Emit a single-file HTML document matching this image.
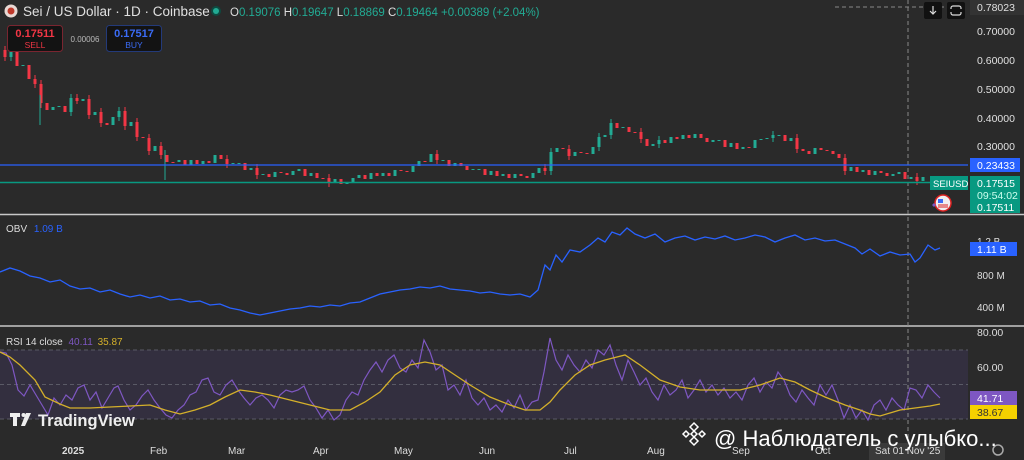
<!DOCTYPE html>
<html><head><meta charset="utf-8">
<style>
html,body{margin:0;padding:0;background:#2a2a2a;width:1024px;height:460px;overflow:hidden;font-family:"Liberation Sans","Noto Sans CJK SC",sans-serif;}
svg{display:block}
</style></head><body>
<svg width="1024" height="460" xmlns="http://www.w3.org/2000/svg" font-family="Liberation Sans, DejaVu Sans, sans-serif">
<rect width="1024" height="460" fill="#2a2a2a"/>
<rect x="0" y="350" width="968" height="69" fill="#332f3f"/>
<line x1="0" y1="350" x2="968" y2="350" stroke="#5a5a66" stroke-dasharray="4,3"/>
<line x1="0" y1="384.5" x2="968" y2="384.5" stroke="#5a5a66" stroke-dasharray="4,3"/>
<line x1="0" y1="419" x2="968" y2="419" stroke="#5a5a66" stroke-dasharray="4,3"/>
<line x1="0" y1="214.5" x2="1024" y2="214.5" stroke="#c8c8c8" stroke-width="1.5"/>
<line x1="0" y1="326" x2="1024" y2="326" stroke="#c8c8c8" stroke-width="1.5"/>
<line x1="908" y1="0" x2="908" y2="440" stroke="#888" stroke-dasharray="4,3"/>
<line x1="835" y1="7" x2="968" y2="7" stroke="#888" stroke-dasharray="4,3"/>

<!-- candles -->
<path stroke="#f23645" stroke-width="3" fill="none" d="M5 50V57M17 52V66M29 65V79M35 79V84M41 84V103M47 103V110M65 106V112M77 98V101M89 99V115M101 112V123M107 123V125M125 111V126M137 122V137M143 137V138M149 138V151M161 146V155M167 155V162M173 162V163M185 160V165M197 160V164M209 161V163M221 155V159M227 159V164M245 163V170M257 168V175M269 174V177M281 172V173M287 173V175M305 169V176M317 173V178M323 178V179M329 178V183M341 179V184M365 175V179M377 173V176M389 173V176M401 170V171M407 171V172M425 161V162M437 154V160M449 160V166M461 163V166M467 166V170M485 169V175M497 171V176M509 174V178M521 174V176M527 176V178M545 168V171M563 148V149M569 149V156M581 152V153M587 153V154M617 123V128M629 127V132M635 132V133M641 132V139M647 139V146M665 140V143M677 137V139M689 135V138M701 134V138M707 138V142M725 140V147M737 143V149M749 147V148M785 135V141M797 138V149M803 149V151M809 151V154M821 148V150M827 150V151M833 151V154M839 154V158M845 158V171M857 167V172M869 170V175M881 171V173M887 173V176M905 172V179M917 177V181"/>
<path stroke="#f23645" stroke-width="1" fill="none" d="M5 46V61M35 75V88M41 80V108M77 94V104M89 95V119M101 108V127M125 107V130M137 118V141M149 134V155M161 142V159M227 155V168M257 164V179M329 174V187M437 150V164M545 164V175M569 145V160M641 128V143M797 134V153M845 154V175M917 173V185"/>
<path stroke="#22ab94" stroke-width="3" fill="none" d="M11 52V57M23 65V66M53 107V110M59 106V107M71 98V112M83 99V101M95 112V115M113 117V125M119 111V117M131 122V126M155 146V151M179 160V162M191 160V165M203 161V164M215 155V163M233 163V164M239 163V164M251 168V170M263 174V175M275 172V177M293 171V175M299 169V171M311 173V176M335 179V183M347 183V184M353 178V183M359 175V178M371 173V179M383 173V176M395 170V176M413 166V172M419 161V166M431 154V162M443 160V161M455 163V166M473 169V170M479 169V170M491 171V175M503 174V176M515 174V178M533 173V178M539 168V173M551 152V171M557 148V152M575 152V156M593 147V154M599 137V147M605 135V137M611 123V135M623 127V128M653 144V146M659 140V144M671 137V143M683 135V139M695 134V138M713 140V142M719 140V141M731 143V147M743 147V149M755 140V148M761 139V140M767 138V139M773 135V138M779 135V136M791 138V141M815 148V154M851 167V171M863 170V172M875 171V175M893 174V176M899 172V174M911 177V179M923 177V181"/>
<path stroke="#22ab94" stroke-width="1" fill="none" d="M11 48V61M40 95V125M71 94V116M119 107V121M165 150V180M551 148V175M599 133V151M611 119V139M659 136V148M773 131V142"/>

<line x1="0" y1="165" x2="968" y2="165" stroke="#2962ff" stroke-width="1.2"/>
<line x1="0" y1="182.5" x2="968" y2="182.5" stroke="#089981" stroke-width="1.5"/>

<polyline fill="none" stroke="#2962ff" stroke-width="1.3" points="0,272 10,268 20,271 30,276 40,278 50,282 60,280 70,286 80,289 90,288 100,292 110,290 120,294 130,297 140,295 150,298 160,296 170,300 180,299 190,302 200,301 210,305 220,304 230,308 240,310 250,313 260,315 270,313 280,311 290,309 300,308 310,306 320,307 330,305 340,306 350,303 360,302 370,298 380,294 390,292 400,290 410,289 420,287 430,288 440,286 450,289 460,290 470,291 480,293 490,292 500,294 510,295 520,294 530,297 538,290 545,265 550,270 556,255 562,262 570,250 580,252 590,245 598,238 605,242 612,232 620,235 627,228 635,234 645,238 655,234 665,242 675,238 685,236 695,240 705,237 715,239 725,236 735,240 745,238 755,235 765,237 775,242 785,238 795,235 805,240 815,238 825,241 835,240 845,244 855,248 862,254 870,249 880,256 890,252 900,255 910,254 915,262 920,258 928,245 935,250 940,248"/>

<polyline fill="none" stroke="#7e57c2" stroke-width="1.2" points="0,352 6,353 12,365 18,390 24,396 30,385 36,395 42,405 48,415 54,398 60,405 66,395 72,400 78,388 84,385 90,400 96,392 102,408 108,398 114,388 118,386 124,400 130,410 136,405 142,396 148,390 154,400 160,408 166,415 172,418 178,410 184,405 190,395 196,392 202,380 208,378 214,392 220,395 226,385 232,380 238,390 244,398 250,405 256,398 262,395 268,400 274,408 280,395 286,390 292,392 298,390 304,386 310,400 316,408 322,418 328,410 334,420 340,415 346,400 352,392 358,395 364,380 370,370 376,362 382,372 388,360 394,355 400,368 406,372 412,360 418,368 424,340 430,352 436,370 442,365 448,390 454,385 460,395 466,380 472,398 478,405 484,398 490,410 496,405 502,412 508,400 514,408 520,395 526,410 532,402 538,400 544,372 550,338 556,360 562,370 568,355 574,365 580,372 586,360 592,368 598,350 604,355 610,345 616,365 622,380 628,360 634,372 640,385 646,378 652,392 658,400 664,385 670,395 676,390 682,380 688,398 694,390 700,380 706,392 712,385 718,395 724,388 730,398 736,392 742,400 748,385 754,378 760,392 766,382 772,388 778,372 784,380 790,395 796,402 802,390 808,398 814,405 820,385 826,395 832,385 838,400 844,418 850,405 856,418 862,410 868,420 874,405 880,400 886,410 892,398 898,405 904,410 910,388 916,390 922,398 928,385 934,392 940,398"/>
<polyline fill="none" stroke="#d4b02a" stroke-width="1.3" points="0,352 10,357 20,365 35,380 45,397 60,404 70,408 90,408 110,407 130,406 150,405 165,410 180,414 195,410 210,405 225,397 240,390 255,392 270,395 290,400 310,405 330,410 350,410 365,402 380,392 395,375 410,365 425,362 440,365 455,375 470,385 490,397 510,405 525,410 540,410 550,402 560,390 575,375 590,365 605,360 625,355 640,365 660,380 680,387 700,390 720,390 740,390 760,385 780,378 795,382 810,390 825,397 845,405 860,410 870,414 880,416 890,413 900,410 915,408 930,406 940,404"/>

<!-- header -->
<circle cx="11" cy="11" r="6.5" fill="#e8d9d4"/><circle cx="11" cy="11" r="3.5" fill="#c0392b"/>
<text x="23" y="16" fill="#e0e0e0" font-size="13.5">Sei / US Dollar · 1D · Coinbase</text>
<circle cx="216" cy="11" r="5" fill="#0e4a40"/><circle cx="216" cy="11" r="3" fill="#22ab94"/>
<text x="230" y="16" font-size="11.5" fill="#ddd">O<tspan fill="#22ab94">0.19076</tspan> H<tspan fill="#22ab94">0.19647</tspan> L<tspan fill="#22ab94">0.18869</tspan> C<tspan fill="#22ab94">0.19464 +0.00389 (+2.04%)</tspan></text>
<rect x="7.5" y="25.5" width="55" height="26" rx="3" fill="#131313" stroke="#7a2530"/>
<text x="35" y="37" fill="#f23645" font-size="11" font-weight="bold" text-anchor="middle">0.17511</text>
<text x="35" y="48" fill="#f23645" font-size="8.5" text-anchor="middle">SELL</text>
<text x="85" y="42" fill="#bbb" font-size="8" text-anchor="middle">0.00006</text>
<rect x="106.5" y="25.5" width="55" height="26" rx="3" fill="#131313" stroke="#233a7a"/>
<text x="134" y="37" fill="#3b6cf6" font-size="11" font-weight="bold" text-anchor="middle">0.17517</text>
<text x="134" y="48" fill="#3b6cf6" font-size="8.5" text-anchor="middle">BUY</text>
<rect x="924" y="2" width="18" height="17" rx="2" fill="#111"/>
<path d="M933 6v8M930 11l3 3 3-3" stroke="#ddd" fill="none" stroke-width="1.2"/>
<rect x="947" y="2" width="18" height="17" rx="2" fill="#111"/>
<rect x="951" y="6" width="10" height="9" rx="2" fill="none" stroke="#ddd" stroke-width="1.2"/>
<rect x="950" y="9" width="12" height="3" fill="#111"/>
<g fill="#e0e0e0" font-size="10.5">
<rect x="970" y="0" width="54" height="15" fill="#333"/>
<text x="977" y="11">0.78023</text>
<text x="977" y="35">0.70000</text>
<text x="977" y="64">0.60000</text>
<text x="977" y="93">0.50000</text>
<text x="977" y="122">0.40000</text>
<text x="977" y="150">0.30000</text>
</g>
<rect x="970" y="158" width="50" height="14" fill="#2962ff"/>
<text x="977" y="169" fill="#fff" font-size="10.5">0.23433</text>
<rect x="930" y="176" width="38" height="14" fill="#089981"/>
<text x="933" y="187" fill="#fff" font-size="9.5">SEIUSD</text>
<rect x="970" y="176" width="50" height="37" fill="#089981"/>
<text x="977" y="187" fill="#fff" font-size="10.5">0.17515</text>
<text x="977" y="199" fill="#cfe" font-size="10.5">09:54:02</text>
<text x="977" y="211" fill="#fff" font-size="10.5">0.17511</text>
<circle cx="943" cy="203" r="8" fill="#f0f0f0" stroke="#d22" stroke-width="1.5"/>
<rect x="938" y="199" width="5" height="4" fill="#3b6cf6"/>
<path d="M938 205h10M938 207h10" stroke="#d22"/>
<path d="M932 205l2-2 2 2-2 2z" fill="#7e57c2"/>
<text x="6" y="232" fill="#ddd" font-size="10">OBV <tspan fill="#2962ff" dx="4">1.09 B</tspan></text>
<text x="977" y="245" fill="#ddd" font-size="10">1.2 B</text>
<rect x="970" y="242" width="47" height="14" fill="#2962ff"/>
<text x="977" y="253" fill="#fff" font-size="10.5">1.11 B</text>
<text x="977" y="279" fill="#ddd" font-size="10">800 M</text>
<text x="977" y="311" fill="#ddd" font-size="10">400 M</text>
<text x="6" y="345" fill="#ddd" font-size="10">RSI 14 close <tspan fill="#7e57c2" dx="3">40.11</tspan> <tspan fill="#d4b02a" dx="2">35.87</tspan></text>
<text x="977" y="336" fill="#ddd" font-size="10.5">80.00</text>
<text x="977" y="371" fill="#ddd" font-size="10.5">60.00</text>
<rect x="970" y="391" width="47" height="14" fill="#7e57c2"/>
<text x="977" y="402" fill="#fff" font-size="10.5">41.71</text>
<rect x="970" y="405" width="47" height="14" fill="#f5d100"/>
<text x="977" y="416" fill="#333" font-size="10.5">38.67</text>
<g fill="#eee">
<path d="M10 413h10v4h-3v9h-4v-9h-3z"/><circle cx="23.5" cy="415" r="2"/><path d="M26 413h5l-6 13h-4z"/>
</g>
<text x="38" y="426" fill="#eee" font-size="16.5" font-weight="bold">TradingView</text>
<g fill="#ddd" font-size="10">
<text x="62" y="454" font-weight="bold">2025</text>
<text x="150" y="454">Feb</text>
<text x="228" y="454">Mar</text>
<text x="313" y="454">Apr</text>
<text x="394" y="454">May</text>
<text x="479" y="454">Jun</text>
<text x="564" y="454">Jul</text>
<text x="647" y="454">Aug</text>
<text x="732" y="454">Sep</text>
<text x="815" y="454">Oct</text>
</g>
<rect x="869" y="443" width="76" height="17" fill="#3a3a3a"/>
<text x="875" y="454" fill="#ddd" font-size="10">Sat 01 Nov '25</text>
<circle cx="998" cy="450" r="5" fill="none" stroke="#aaa" stroke-width="1.5"/>
<path d="M690 427l4-4 4 4-4 4z M683 434l3-3 3 3-3 3z M699 434l3-3 3 3-3 3z M690 441l4-4 4 4-4 4z M691 434l3-3 3 3-3 3z" fill="none" stroke="#fff" stroke-width="1.5"/>
<text x="714" y="446" fill="#fff" font-size="22">@ Наблюдатель с улыбко...</text>
</svg>
</body></html>
